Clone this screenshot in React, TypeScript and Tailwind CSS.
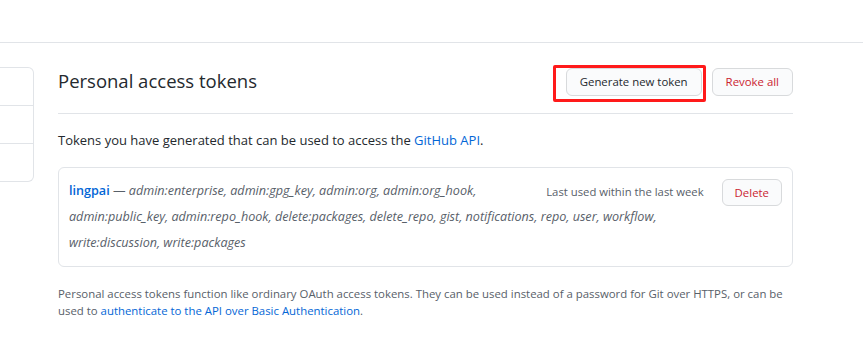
import React from 'react'

const scopes = [
  'admin:enterprise, admin:gpg_key, admin:org, admin:org_hook,',
  'admin:public_key, admin:repo_hook, delete:packages, delete_repo, gist, notifications, repo, user, workflow,',
  'write:discussion, write:packages',
]

export default function App() {
  return (
    <div
      className="w-[863px] h-[353px] bg-white overflow-hidden text-[#24292e]"
      style={{ fontFamily: '"Open Sans", "Noto Sans", sans-serif' }}
    >
      {/* top bar */}
      <div className="h-[43px] border-b border-[#e1e4e8]" />

      <div className="flex pt-[24px]">
        {/* settings side menu (cut off) */}
        <div className="w-[34px] h-[115px] border border-l-0 border-[#e1e4e8] rounded-r-md flex flex-col shrink-0">
          <div className="h-[38px] border-b border-[#e1e4e8]" />
          <div className="h-[38px] border-b border-[#e1e4e8]" />
          <div className="flex-1" />
        </div>

        <div className="ml-[24px] w-[735px]">
          {/* header */}
          <div className="flex items-start justify-between pb-[17px] border-b border-[#e1e4e8]">
            <h2 className="text-[18.5px] leading-[28px] font-normal">Personal access tokens</h2>
            <div className="flex items-center gap-[10px] pt-[1px]">
              <div className="relative">
                <button className="h-[28px] px-[13px] text-[11.4px] font-medium bg-[#fafbfc] border border-[#d8dadc] rounded-md text-[#24292e]">
                  Generate new token
                </button>
                <span className="absolute left-[-13px] right-[-4px] top-[-3px] bottom-[-6px] border-[3px] border-[#ff1a1a] rounded-[2px] pointer-events-none" />
              </div>
              <button className="h-[28px] px-[13px] text-[11.4px] font-medium bg-[#fafbfc] border border-[#d8dadc] rounded-md text-[#cb2431]">
                Revoke all
              </button>
            </div>
          </div>

          <p className="mt-[16px] text-[13px] leading-[21px]">
            Tokens you have generated that can be used to access the{' '}
            <a className="text-[#0366d6]">GitHub API</a>.
          </p>

          {/* token list */}
          <div className="mt-[16px] border border-[#e1e4e8] rounded-md pt-[10px] pb-[10px] px-[10px] flex">
            <div className="flex-1 min-w-0 text-[12.6px] leading-[26px] text-[#586069] whitespace-nowrap">
              <a className="text-[#0366d6] font-semibold not-italic">lingpai</a>
              <span className="text-[#586069]"> — </span>
              <em>{scopes[0]}</em>
              <br />
              <em>{scopes[1]}</em>
              <br />
              <em>{scopes[2]}</em>
            </div>
            <div className="shrink-0 flex items-center gap-[18px] h-[27px] mt-[1px] whitespace-nowrap">
              <span className="text-[11.3px] text-[#586069]">Last used within the last week</span>
              <button className="h-[27px] px-[12px] text-[11.4px] font-medium bg-[#fafbfc] border border-[#d8dadc] rounded-md text-[#cb2431]">
                Delete
              </button>
            </div>
          </div>

          <p className="mt-[18px] text-[11.4px] leading-[17px] text-[#586069]">
            Personal access tokens function like ordinary OAuth access tokens. They can be used instead of a password for Git over HTTPS, or can be
            <br />
            used to <a className="text-[#0366d6]">authenticate to the API over Basic Authentication</a>.
          </p>
        </div>
      </div>
    </div>
  )
}
